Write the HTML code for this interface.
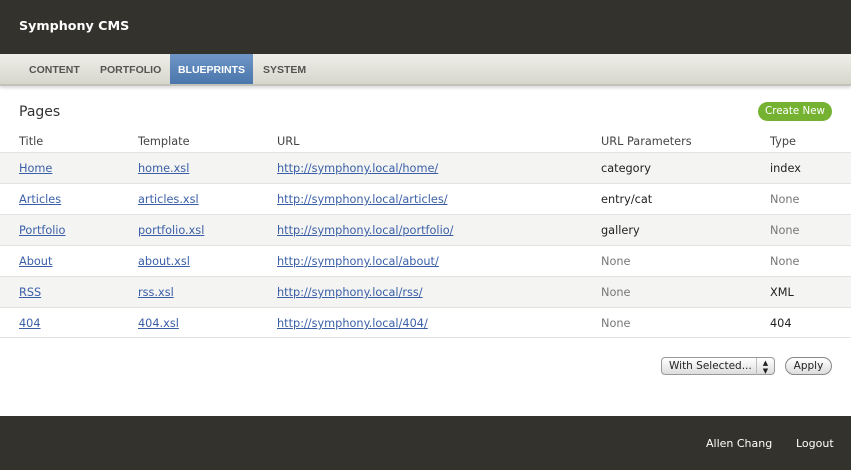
<!DOCTYPE html>
<html><head><style>
*{margin:0;padding:0;box-sizing:border-box}
body{width:851px;height:470px;overflow:hidden;background:#fff;font-family:"DejaVu Sans",sans-serif;font-size:11.3px;color:#222;position:relative}
#hd{position:absolute;top:0;left:0;width:851px;height:54px;background:#33322c}
#hd h1{position:absolute;left:19px;top:18px;color:#fff;font-size:12.7px;font-weight:bold;font-family:"DejaVu Sans",sans-serif}
#nav{position:absolute;top:54px;left:0;width:851px;height:32px;background:linear-gradient(#efefe9,#d6d6cd);border-bottom:2px solid #c3c3bb;box-shadow:0 2px 3px rgba(0,0,0,.15)}
#nav span{position:absolute;top:0;height:30px;line-height:33px;font-size:10.5px;font-weight:bold;color:#55554f;font-family:"Liberation Sans",sans-serif}
#nav .a{background:linear-gradient(#6f96c6,#4a76ac);color:#fff;text-align:center}
h2{position:absolute;left:19px;top:104px;font-size:14px;font-weight:normal;color:#333}
.btn{position:absolute;left:758px;top:102px;width:74px;height:19px;border-radius:10px;background:#76b231;color:#fff;font-size:10.3px;text-align:center;line-height:19px}
.row{position:absolute;left:0;width:851px;height:31px;border-top:1px solid #e3e3e0}
.row.g{background:#f4f4f2}
.c{position:absolute;top:9px}
a{color:#3a5fa8;text-decoration:underline}
.n{color:#777}
.th{position:absolute;top:135px;color:#444}
#ft{position:absolute;top:416px;left:0;width:851px;height:54px;background:#33322c;color:#fff;font-size:11px}
.sel{position:absolute;left:661px;top:357px;width:114px;height:18px;border:1px solid #999;border-radius:4px;background:linear-gradient(#fff,#ddd);font-size:10.5px;line-height:16px;padding-left:7px}
.ap{position:absolute;left:785px;top:357px;width:47px;height:18px;border:1px solid #888;border-radius:9px;background:linear-gradient(#fff,#ddd);font-size:10.5px;line-height:16px;text-align:center}
</style></head><body>
<div id="hd"><h1>Symphony CMS</h1></div>
<div id="nav">
<span style="left:29px">CONTENT</span>
<span style="left:100px">PORTFOLIO</span>
<span class="a" style="left:170px;width:83px">BLUEPRINTS</span>
<span style="left:263px">SYSTEM</span>
</div>
<h2>Pages</h2>
<div class="btn">Create New</div>
<div class="th" style="left:19px">Title</div>
<div class="th" style="left:138px">Template</div>
<div class="th" style="left:277px">URL</div>
<div class="th" style="left:601px">URL Parameters</div>
<div class="th" style="left:770px">Type</div>

<div class="row g" style="top:152px"><span class="c" style="left:19px"><a>Home</a></span><span class="c" style="left:138px"><a>home.xsl</a></span><span class="c" style="left:277px"><a>http://symphony.local/home/</a></span><span class="c" style="left:601px">category</span><span class="c" style="left:770px">index</span></div>
<div class="row" style="top:183px"><span class="c" style="left:19px"><a>Articles</a></span><span class="c" style="left:138px"><a>articles.xsl</a></span><span class="c" style="left:277px"><a>http://symphony.local/articles/</a></span><span class="c" style="left:601px">entry/cat</span><span class="c n" style="left:770px">None</span></div>
<div class="row g" style="top:214px"><span class="c" style="left:19px"><a>Portfolio</a></span><span class="c" style="left:138px"><a>portfolio.xsl</a></span><span class="c" style="left:277px"><a>http://symphony.local/portfolio/</a></span><span class="c" style="left:601px">gallery</span><span class="c n" style="left:770px">None</span></div>
<div class="row" style="top:245px"><span class="c" style="left:19px"><a>About</a></span><span class="c" style="left:138px"><a>about.xsl</a></span><span class="c" style="left:277px"><a>http://symphony.local/about/</a></span><span class="c n" style="left:601px">None</span><span class="c n" style="left:770px">None</span></div>
<div class="row g" style="top:276px"><span class="c" style="left:19px"><a>RSS</a></span><span class="c" style="left:138px"><a>rss.xsl</a></span><span class="c" style="left:277px"><a>http://symphony.local/rss/</a></span><span class="c n" style="left:601px">None</span><span class="c" style="left:770px">XML</span></div>
<div class="row" style="top:307px;border-bottom:1px solid #e3e3e0"><span class="c" style="left:19px"><a>404</a></span><span class="c" style="left:138px"><a>404.xsl</a></span><span class="c" style="left:277px"><a>http://symphony.local/404/</a></span><span class="c n" style="left:601px">None</span><span class="c" style="left:770px">404</span></div>

<div class="sel">With Selected...<span style="position:absolute;right:0;top:0;width:18px;border-left:1px solid #bbb;text-align:center;font-size:7px;line-height:8px;padding-top:1px">▲<br>▼</span></div>
<div class="ap">Apply</div>
<div id="ft"><span style="position:absolute;left:706px;top:21px">Allen Chang</span><span style="position:absolute;left:796px;top:21px">Logout</span></div>
</body></html>
